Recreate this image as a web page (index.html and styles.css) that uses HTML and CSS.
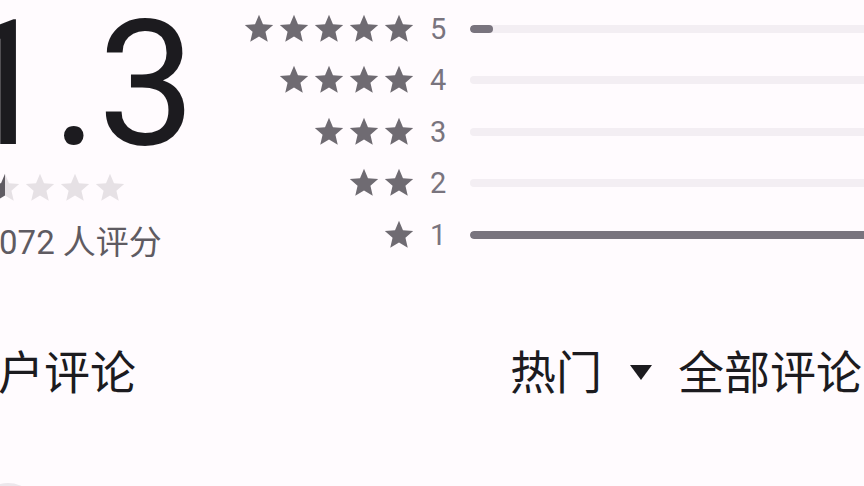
FILE: index.html
```html
<!DOCTYPE html>
<html lang="zh-CN">
<head>
<meta charset="utf-8">
<title>评分与评论</title>
<link rel="stylesheet" href="styles.css">
</head>
<body>
<svg width="0" height="0" class="defs" aria-hidden="true">
  <defs>
    <linearGradient id="half" x1="0" x2="1" y1="0" y2="0">
      <stop offset="50%" stop-color="#5f5b62"/>
      <stop offset="50%" stop-color="#e6e1e5"/>
    </linearGradient>
    <path id="star" d="M12 17.27L18.18 21l-1.64-7.03L22 9.24l-7.19-.61L12 2 9.19 8.63 2 9.24l5.46 4.73L5.82 21z"/>
  </defs>
</svg>
<div class="page">
  <section class="summary">
    <div class="score">
      <div class="score-value">1.3</div>
      <div class="score-stars">
        <svg class="star on" viewBox="0 0 24 24"><use href="#star"/></svg>
        <svg class="star part" viewBox="0 0 24 24"><path fill="url(#half)" d="M12 17.27L18.18 21l-1.64-7.03L22 9.24l-7.19-.61L12 2 9.19 8.63 2 9.24l5.46 4.73L5.82 21z"/></svg>
        <svg class="star off" viewBox="0 0 24 24"><use href="#star"/></svg>
        <svg class="star off" viewBox="0 0 24 24"><use href="#star"/></svg>
        <svg class="star off" viewBox="0 0 24 24"><use href="#star"/></svg>
      </div>
      <div class="score-count">1,072 人评分</div>
    </div>
    <div class="dist">
      <div class="dist-row">
        <div class="dist-stars">
          <svg class="rstar" viewBox="0 0 24 24"><use href="#star"/></svg>
          <svg class="rstar" viewBox="0 0 24 24"><use href="#star"/></svg>
          <svg class="rstar" viewBox="0 0 24 24"><use href="#star"/></svg>
          <svg class="rstar" viewBox="0 0 24 24"><use href="#star"/></svg>
          <svg class="rstar" viewBox="0 0 24 24"><use href="#star"/></svg>
        </div>
        <span class="dist-num">5</span>
        <div class="bar"><div class="bar-fill" style="width: 5%"></div></div>
      </div>
      <div class="dist-row">
        <div class="dist-stars">
          <svg class="rstar" viewBox="0 0 24 24"><use href="#star"/></svg>
          <svg class="rstar" viewBox="0 0 24 24"><use href="#star"/></svg>
          <svg class="rstar" viewBox="0 0 24 24"><use href="#star"/></svg>
          <svg class="rstar" viewBox="0 0 24 24"><use href="#star"/></svg>
        </div>
        <span class="dist-num">4</span>
        <div class="bar"><div class="bar-fill" style="width: 0%"></div></div>
      </div>
      <div class="dist-row">
        <div class="dist-stars">
          <svg class="rstar" viewBox="0 0 24 24"><use href="#star"/></svg>
          <svg class="rstar" viewBox="0 0 24 24"><use href="#star"/></svg>
          <svg class="rstar" viewBox="0 0 24 24"><use href="#star"/></svg>
        </div>
        <span class="dist-num">3</span>
        <div class="bar"><div class="bar-fill" style="width: 0%"></div></div>
      </div>
      <div class="dist-row">
        <div class="dist-stars">
          <svg class="rstar" viewBox="0 0 24 24"><use href="#star"/></svg>
          <svg class="rstar" viewBox="0 0 24 24"><use href="#star"/></svg>
        </div>
        <span class="dist-num">2</span>
        <div class="bar"><div class="bar-fill" style="width: 0%"></div></div>
      </div>
      <div class="dist-row">
        <div class="dist-stars">
          <svg class="rstar" viewBox="0 0 24 24"><use href="#star"/></svg>
        </div>
        <span class="dist-num">1</span>
        <div class="bar"><div class="bar-fill" style="width: 95%"></div></div>
      </div>
    </div>
  </section>
  <section class="reviews-head">
    <h2 class="reviews-title">用户评论</h2>
    <div class="sort">
      <span class="sort-label">热门</span>
      <svg class="sort-arrow" viewBox="0 0 22 15"><polygon points="0,0 22,0 11,15"/></svg>
      <span class="sort-label">全部评论</span>
    </div>
  </section>
  <div class="review">
    <div class="avatar"></div>
  </div>
</div>
</body>
</html>
```

FILE: styles.css
```css
html, body {
  margin: 0;
  padding: 0;
}
body {
  width: 864px;
  height: 486px;
  overflow: hidden;
  background: #fffbfe;
  font-family: Roboto, "Noto Sans CJK SC", sans-serif;
  color: #1c1b1f;
}
.defs {
  position: absolute;
  width: 0;
  height: 0;
}
.page {
  width: 910px;
  margin-left: -48px;
}
.summary {
  display: flex;
  align-items: flex-start;
}
.score {
  width: 290px;
  flex: none;
  display: flex;
  flex-direction: column;
}
.score-value {
  font-size: 174px;
  line-height: 176px;
  margin-top: -3px;
  margin-left: 2px;
  letter-spacing: 0;
}
.score-stars {
  display: flex;
  gap: 1px;
  margin-left: 1px;
  margin-top: -2px;
}
.star {
  width: 34px;
  height: 34px;
  display: block;
}
.star.on { fill: #5f5b62; }
.star.off { fill: #e6e1e5; }
.score-count {
  margin-top: 20px;
  margin-left: 22px;
  font-size: 33px;
  line-height: 36px;
  color: #5f5b62;
  white-space: nowrap;
}
.dist {
  flex: 1;
  margin-right: -60px;
  padding-top: 3px;
}
.dist-row {
  display: flex;
  align-items: center;
  height: 51.5px;
}
.dist-stars {
  width: 174px;
  flex: none;
  display: flex;
  justify-content: flex-end;
  gap: 1px;
}
.rstar {
  width: 34px;
  height: 34px;
  display: block;
  fill: #6f6b72;
}
.dist-num {
  width: 17px;
  margin-left: 14px;
  margin-right: 23px;
  font-size: 29px;
  line-height: 34px;
  color: #79747e;
}
.bar {
  flex: 1;
  height: 8px;
  border-radius: 4px;
  background: #f3eef3;
  overflow: hidden;
}
.bar-fill {
  height: 100%;
  border-radius: 4px;
  background: #79747e;
  min-width: 0;
}
.reviews-head {
  display: flex;
  justify-content: space-between;
  align-items: center;
  margin-top: 84px;
  height: 56px;
}
.reviews-title {
  margin: 0;
  font-size: 46px;
  font-weight: 400;
  line-height: 56px;
  color: #1c1b1f;
}
.sort {
  display: flex;
  align-items: center;
  font-size: 46px;
  line-height: 56px;
  color: #1c1b1f;
}
.sort-arrow {
  width: 22px;
  height: 15px;
  margin: 0 26px 2px 28px;
  fill: #1c1b1f;
}
.review {
  margin-top: 82px;
}
.avatar {
  width: 64px;
  height: 64px;
  border-radius: 50%;
  margin-left: 24px;
  background: #ece7ec;
}
```
